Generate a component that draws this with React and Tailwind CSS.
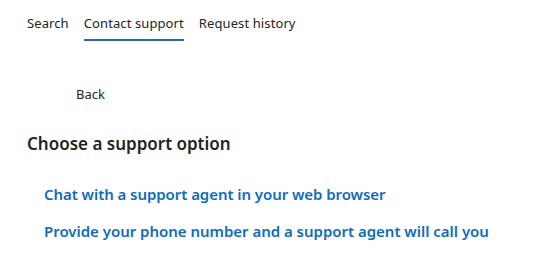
export default function App() {
  const tabs = ['Search', 'Contact support', 'Request history']
  return (
    <div className="h-[272px] w-[550px] bg-white text-[#242424]" style={{ fontFamily: '"Noto Sans", "Open Sans", sans-serif' }}>
      <nav className="flex gap-[15px] px-[27px] pt-[13px]">
        {tabs.map((t) => (
          <div key={t} className="flex flex-col">
            <span className="text-[13px] leading-[20px] tracking-[0.1px]">{t}</span>
            <span className={`mt-[6px] h-[2px] ${t === 'Contact support' ? 'bg-[#2b6aa8]' : ''}`} />
          </div>
        ))}
      </nav>
      <div className="pl-[76px] pt-[44px] text-[13px] leading-[18px]">Back</div>
      <h2 className="pl-[27px] pt-[29px] text-[17px] font-semibold leading-[24px]">Choose a support option</h2>
      <div className="flex flex-col gap-[15px] pl-[44px] pt-[27px]">
        <a href="#" className="text-[15px] font-semibold leading-[22px] tracking-[-0.06px] text-[#0f6cbd]">Chat with a support agent in your web browser</a>
        <a href="#" className="text-[15px] font-semibold leading-[22px] tracking-[-0.02px] text-[#0f6cbd]">Provide your phone number and a support agent will call you</a>
      </div>
    </div>
  )
}
